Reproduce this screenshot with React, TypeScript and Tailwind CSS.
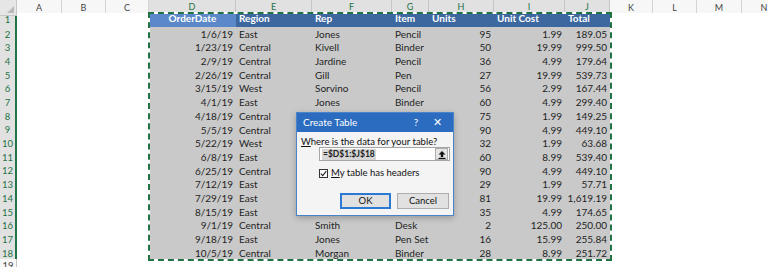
import React from 'react';

const COLS = ['A', 'B', 'C', 'D', 'E', 'F', 'G', 'H', 'I', 'J', 'K', 'L', 'M', 'N'];
const GRID = 'grid grid-cols-[17px_45px_44px_43px_87px_76px_80px_37px_65px_71px_45px_43px_44px_45px_45px]';

// alignment per table column (D..J -> index 3..9)
const ALIGN: Record<number, string> = {
  3: 'justify-end',
  4: 'justify-start',
  5: 'justify-start',
  6: 'justify-start',
  7: 'justify-end',
  8: 'justify-end',
  9: 'justify-end',
};

const HEADERS = ['OrderDate', 'Region', 'Rep', 'Item', 'Units', 'Unit Cost', 'Total'];

const DATA: string[][] = [
  ['1/6/19', 'East', 'Jones', 'Pencil', '95', '1.99', '189.05'],
  ['1/23/19', 'Central', 'Kivell', 'Binder', '50', '19.99', '999.50'],
  ['2/9/19', 'Central', 'Jardine', 'Pencil', '36', '4.99', '179.64'],
  ['2/26/19', 'Central', 'Gill', 'Pen', '27', '19.99', '539.73'],
  ['3/15/19', 'West', 'Sorvino', 'Pencil', '56', '2.99', '167.44'],
  ['4/1/19', 'East', 'Jones', 'Binder', '60', '4.99', '299.40'],
  ['4/18/19', 'Central', 'Andrews', 'Pencil', '75', '1.99', '149.25'],
  ['5/5/19', 'Central', 'Jardine', 'Pencil', '90', '4.99', '449.10'],
  ['5/22/19', 'West', 'Thompson', 'Pencil', '32', '1.99', '63.68'],
  ['6/8/19', 'East', 'Jones', 'Binder', '60', '8.99', '539.40'],
  ['6/25/19', 'Central', 'Morgan', 'Pencil', '90', '4.99', '449.10'],
  ['7/12/19', 'East', 'Howard', 'Binder', '29', '1.99', '57.71'],
  ['7/29/19', 'East', 'Parent', 'Binder', '81', '19.99', '1,619.19'],
  ['8/15/19', 'East', 'Jones', 'Pencil', '35', '4.99', '174.65'],
  ['9/1/19', 'Central', 'Smith', 'Desk', '2', '125.00', '250.00'],
  ['9/18/19', 'East', 'Jones', 'Pen Set', '16', '15.99', '255.84'],
  ['10/5/19', 'Central', 'Morgan', 'Binder', '28', '8.99', '251.72'],
];

const inTable = (c: number) => c >= 3 && c <= 9;
// cells fully hidden behind the dialog: rows 8-14, columns F and G
const hidden = (n: number, c: number) => n >= 8 && n <= 14 && (c === 5 || c === 6);

function ColumnHeaders() {
  return (
    <div className={`${GRID} h-[13px]`}>
      <div className="relative border-r border-b border-[#c6c6c6] bg-[#e6e6e6]">
        <svg className="absolute right-[2px] bottom-[2px]" width="7" height="7" viewBox="0 0 7 7">
          <path d="M7 0 V7 H0 Z" fill="#b9b9b9" />
        </svg>
      </div>
      {COLS.map((c, i) => (
        <div
          key={c}
          className={`flex items-center justify-center border-r text-[9px] ${
            inTable(i)
              ? 'border-[#c6c6c6] border-b-2 border-b-[#217346] bg-[#e1e1e1] text-[#217346]'
              : 'border-[#d4d4d4] border-b border-b-[#c6c6c6] bg-[#f7f7f7] text-[#444]'
          }`}
        >
          {c}
        </div>
      ))}
    </div>
  );
}

function Row({ n }: { n: number }) {
  const selected = n >= 1 && n <= 18;
  const isHead = n === 1;
  const values = isHead ? HEADERS : n <= 18 ? DATA[n - 2] : null;

  return (
    <div className={`${GRID} h-[13.7px]`}>
      <div
        className={`flex items-center justify-center border-b text-[9.5px] ${
          selected
            ? 'border-b-[#d4d4d4] border-r-2 border-r-[#217346] bg-[#e1e1e1] text-[#217346]'
            : 'border-b-[#d4d4d4] border-r border-r-[#c6c6c6] bg-[#f7f7f7] text-[#444]'
        }`}
      >
        {n}
      </div>
      {COLS.map((c, i) => {
        if (!selected || !inTable(i) || !values) return <div key={c} className="bg-white" />;
        const v = hidden(n, i) ? '' : values[i - 3];
        if (isHead) {
          return (
            <div
              key={c}
              className={`flex items-end overflow-hidden whitespace-nowrap border-b border-[#2f568a] px-[3px] pb-[1px] text-[10px] font-bold text-white ${
                i === 3 ? 'justify-center bg-[#5a88c8]' : 'justify-start bg-[#3d679f]'
              }`}
            >
              {v}
            </div>
          );
        }
        return (
          <div
            key={c}
            className={`flex items-end overflow-visible whitespace-nowrap border-b border-[#8298bd] bg-[#c9c9c9] px-[3px] pb-[1px] text-[10px] text-[#1f1f1f] ${ALIGN[i]}`}
          >
            {v}
          </div>
        );
      })}
    </div>
  );
}

function Marquee() {
  return (
    <div className="pointer-events-none absolute left-[148px] top-[12px] h-[249px] w-[464px]">
      <div className="absolute inset-0 border-2 border-white" />
      <div className="absolute inset-0 border-2 border-dashed border-[#217346]" />
    </div>
  );
}

function CollapseIcon() {
  return (
    <svg width="8" height="9" viewBox="0 0 8 9">
      <path d="M4 1 L7.5 4.5 H5.2 V7 H2.8 V4.5 H0.5 Z" fill="#111" />
      <rect x="0.5" y="7.8" width="7" height="1.2" fill="#111" />
    </svg>
  );
}

function CreateTableDialog() {
  return (
    <div className="absolute left-[296px] top-[112px] flex h-[104px] w-[158px] flex-col border border-[#4a84c8] bg-[#f4f4f4] font-['Lato',sans-serif] shadow-[0_2px_6px_rgba(0,0,0,0.25)]">
      <div className="flex h-[19px] items-center bg-[#2b6cc0] pl-[6px] text-[10px] text-white">
        <span className="flex-1">Create Table</span>
        <span className="w-[18px] text-center text-[10px]">?</span>
        <span className="mr-[4px] w-[24px] text-center text-[11px]">✕</span>
      </div>
      <div className="relative flex-1">
        <div className="absolute left-[4px] top-[3px] whitespace-nowrap text-[9.5px] text-[#111]">
          <span className="underline">W</span>here is the data for your table?
        </div>
        <div className="absolute left-[22px] top-[15px] flex h-[14px] w-[131px] items-center border border-[#a6a6a6] bg-white">
          <span className="ml-[2px] bg-[#d6d6d6] px-[1px] text-[8.5px] font-bold leading-[11px] text-[#222]">=$D$1:$J$18</span>
          <div className="ml-auto mr-[1px] flex h-[12px] w-[13px] items-center justify-center border border-[#adadad] bg-[#e5e5e5]">
            <CollapseIcon />
          </div>
        </div>
        <div className="absolute left-[22px] top-[34px] flex items-center gap-[3px] whitespace-nowrap text-[9.5px] text-[#111]">
          <div className="flex h-[9px] w-[9px] items-center justify-center border border-[#333] bg-white">
            <svg width="7" height="7" viewBox="0 0 7 7">
              <path d="M0.8 3.6 L2.7 5.6 L6.3 1.2" fill="none" stroke="#222" strokeWidth="1.1" />
            </svg>
          </div>
          <span>
            <span className="underline">M</span>y table has headers
          </span>
        </div>
        <button className="absolute left-[43px] top-[61px] flex h-[16px] w-[51px] items-center justify-center border-2 border-[#2a7ad4] bg-[#e1e1e1] text-[9.5px] text-[#111]">
          OK
        </button>
        <button className="absolute left-[100px] top-[61px] flex h-[16px] w-[52px] items-center justify-center border border-[#adadad] bg-[#e1e1e1] text-[9.5px] text-[#111]">
          Cancel
        </button>
      </div>
    </div>
  );
}

export default function App() {
  const rows = Array.from({ length: 19 }, (_, i) => i + 1);
  return (
    <div className="relative h-[267px] w-[768px] overflow-hidden bg-white font-['Lato',sans-serif]">
      <ColumnHeaders />
      {rows.map((n) => (
        <Row key={n} n={n} />
      ))}
      <Marquee />
      <CreateTableDialog />
    </div>
  );
}
